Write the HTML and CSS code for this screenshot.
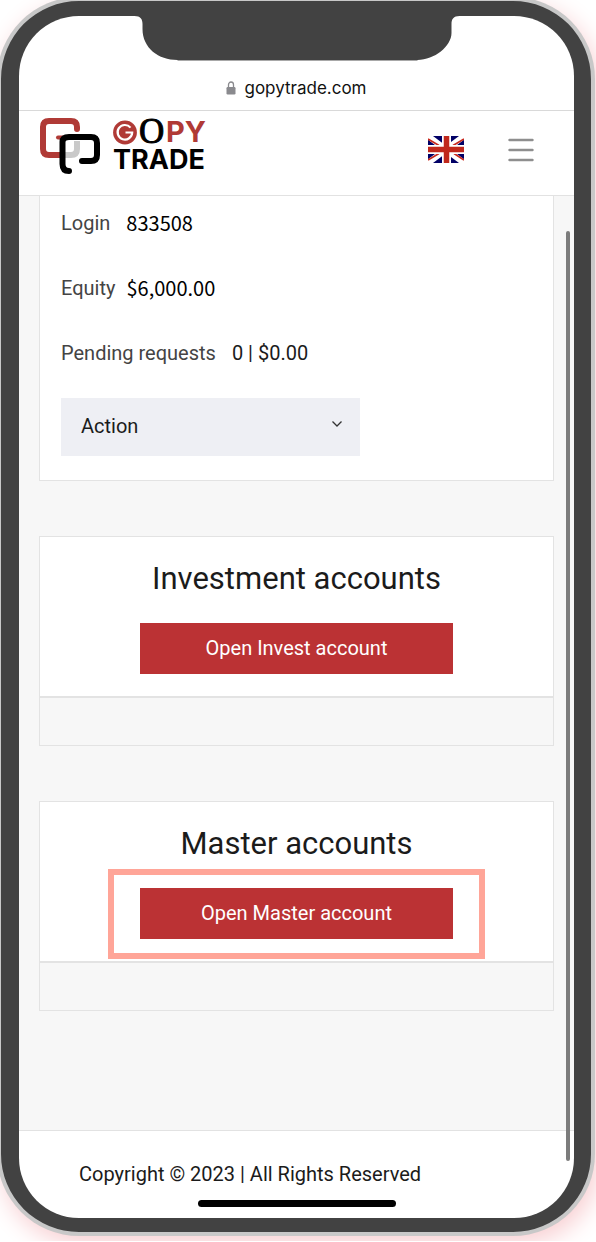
FILE: index.html
```html
<!DOCTYPE html>
<html lang="en">
<head>
<meta charset="utf-8">
<meta name="viewport" content="width=device-width, initial-scale=1">
<title>GopyTrade accounts</title>
<link rel="stylesheet" href="styles.css">
</head>
<body>
<div class="phone">
  <div class="screen">
    <svg class="notch" viewBox="0 0 325 45" aria-hidden="true">
      <path fill="#424242" d="M0 0H325C319 0 317 3 317 8V17C317 30 300 44 283 44H43C24 44 8 32 8 13V8C8 3 6 0 0 0Z"/>
      <path fill="none" stroke="#a8a8a8" d="M43 44.5H283"/>
    </svg>
    <div class="address">
      <svg class="lock" viewBox="0 0 10 14" aria-hidden="true">
        <rect x="0.5" y="6" width="9" height="7.5" rx="1.2" fill="#8a8a8e"/>
        <path d="M2.5 6.5V3.8a2.5 2.8 0 0 1 5 0V6.5" fill="none" stroke="#8a8a8e" stroke-width="1.3"/>
      </svg>
      <span>gopytrade.com</span>
    </div>

    <header class="header">
      <a class="brand" href="#" aria-label="Gopy Trade">
        <svg class="logo" viewBox="38 111 170 65" aria-hidden="true">
          <g fill="none" stroke-width="6" stroke-linecap="round">
            <path stroke="#c9c9c9" stroke-linecap="butt" d="M77 141V149Q77 155 71 155H65"/>
            <path stroke="#b03a36" d="M77 129V127Q77 121 71 121H49Q43 121 43 127V149Q43 155 49 155H61"/>
            <path stroke="#b03a36" stroke-width="4" d="M58 137.500H64"/>
            <path stroke="#000" d="M69 171Q62.500 171 62.500 164V142Q62.500 137 69 137H91Q97 137 97 143V155Q97 161 91 161H82"/>
          </g>
          <circle cx="125" cy="132.500" r="11.900" fill="#b03a36"/>
          <path fill="none" stroke="#fff" stroke-width="2.200" d="M130.500 127.600A7.300 7.300 0 1 0 132.200 132.500H125.500"/>
          <text class="logo-o" x="139" y="143">O</text>
          <text class="logo-py" x="166" y="142">PY</text>
          <text class="logo-trade" x="113" y="169">TRADE</text>
        </svg>
      </a>
      <div class="tools">
        <button class="icon-button" type="button" aria-label="Language: English">
          <svg class="flag" viewBox="0 0 36 27" aria-hidden="true">
            <rect width="36" height="27" fill="#010066"/>
            <path d="M0 0L36 27M36 0L0 27" stroke="#fff" stroke-width="6"/>
            <path d="M0 3L11 9.500M36 24L26 17.500M36 3L25 9.500M0 24L11 17.500" stroke="#c8281e" stroke-width="1.600"/>
            <path d="M18.500 0V27M0 13.500H36" stroke="#fff" stroke-width="9"/>
            <path d="M18.500 0V27M0 13.500H36" stroke="#c0281c" stroke-width="5.500"/>
          </svg>
        </button>
        <button class="icon-button" type="button" aria-label="Menu">
          <svg class="menu" viewBox="0 0 26 24" aria-hidden="true">
            <path d="M1.500 2H24.500M1.500 12H24.500M1.500 22H24.500" stroke="#8e8e8e" stroke-width="2.400" stroke-linecap="round"/>
          </svg>
        </button>
      </div>
    </header>

    <main class="main">
      <section class="card details">
        <dl class="facts">
          <div class="fact"><dt>Login</dt><dd class="entered">833508</dd></div>
          <div class="fact fact-tight"><dt>Equity</dt><dd class="entered">$6,000.00</dd></div>
          <div class="fact"><dt>Pending requests</dt><dd>0 | $0.00</dd></div>
        </dl>
        <div class="picker">
          <select class="select" aria-label="Action">
            <option>Action</option>
          </select>
          <svg class="chevron" viewBox="0 0 12 8" aria-hidden="true">
            <path d="M1.500 1.500L6 6L10.500 1.500" fill="none" stroke="#333" stroke-width="1.300"/>
          </svg>
        </div>
      </section>

      <section class="card">
        <div class="card-top">
          <h2 class="title">Investment accounts</h2>
          <div class="action"><button class="open" type="button">Open Invest account</button></div>
        </div>
        <div class="card-foot"></div>
      </section>

      <section class="card">
        <div class="card-top">
          <h2 class="title">Master accounts</h2>
          <div class="action action-marked"><button class="open" type="button">Open Master account</button></div>
        </div>
        <div class="card-foot"></div>
      </section>
    </main>

    <footer class="footer">
      <p class="copyright">Copyright © 2023 | All Rights Reserved</p>
      <div class="home-bar"></div>
    </footer>
    <div class="scroll-thumb"></div>
  </div>
</div>
</body>
</html>
```

FILE: styles.css
```css
* {
  box-sizing: border-box;
}

body {
  margin: 0;
  overflow-x: hidden;
  background: #fff;
  color: #1b1b1b;
  font-family: Roboto, "Liberation Sans", sans-serif;
  font-size: 20px;
  line-height: 24px;
}

.phone {
  margin: 1px 5px 9px 1px;
  border: solid #424242;
  border-width: 15px 17px 14px 18px;
  border-radius: 78px;
  background: #424242;
  box-shadow: 0 0 0 4px #c8c8c8, 4px 8px 24px 4px #f8cfd2;
}

.screen {
  position: relative;
  overflow: hidden;
  border-radius: 60px;
  background: #fff;
}

.notch {
  position: absolute;
  top: 0;
  left: 50%;
  width: 325px;
  height: 45px;
  transform: translateX(-50%);
}

.address {
  display: flex;
  align-items: center;
  justify-content: center;
  gap: 8px;
  padding: 60px 0 10px;
  border-bottom: 1px solid #d9d9d9;
  color: #111;
  font-family: Inter, sans-serif;
  font-size: 17px;
}

.lock {
  width: 10px;
  height: 14px;
}

.header {
  display: flex;
  align-items: center;
  justify-content: space-between;
  padding: 0 40px 19px 19px;
  border-bottom: 1px solid #e2e2e2;
}

.brand,
.logo {
  display: block;
}

.logo {
  width: 170px;
  height: 65px;
}

.logo-o {
  stroke: #000;
  font: 35px "Liberation Serif", serif;
}

.logo-py {
  fill: #b03a36;
  font: bold 29px Inter, sans-serif;
}

.logo-trade {
  font: bold 27px Inter, sans-serif;
}

.tools {
  display: flex;
  align-items: center;
  gap: 44px;
  padding-top: 12px;
}

.icon-button {
  display: block;
  padding: 0;
  border: 0;
  background: none;
}

.flag,
.menu {
  display: block;
}

.flag {
  width: 36px;
  height: 27px;
}

.menu {
  width: 26px;
  height: 24px;
}

.main {
  display: grid;
  gap: 55px;
  padding: 0 20px 119px;
  background: #f7f7f7;
}

.card {
  border: 1px solid #e3e3e3;
}

.details {
  padding: 15px 21px 24px;
  border-top: 0;
  background: #fff;
}

.facts {
  display: grid;
  gap: 41px;
  margin: 0 0 33px;
}

.fact {
  display: flex;
  gap: 16px;
}

.fact-tight {
  gap: 11px;
}

.fact dt {
  color: #444;
}

.fact dd {
  margin: 0;
}

.fact .entered {
  color: #000;
  font-family: "Noto Sans CJK SC", sans-serif;
}

.picker {
  position: relative;
  width: 299px;
  max-width: 100%;
}

.select {
  display: block;
  width: 100%;
  height: 58px;
  padding: 0 20px 2px;
  border: 0;
  border-radius: 0;
  background: #eeeff4;
  color: #1b1b1b;
  font: inherit;
  appearance: none;
}

.chevron {
  position: absolute;
  top: 22px;
  right: 17px;
  width: 12px;
  height: 8px;
  pointer-events: none;
}

.card-top {
  display: grid;
  gap: 24px;
  padding: 22px 0;
  border-bottom: 2px solid #e3e3e3;
  background: #fff;
}

.title {
  margin: 0;
  font-size: 31px;
  font-weight: 400;
  line-height: 40px;
  text-align: center;
}

.action {
  position: relative;
  width: 61%;
  margin: 0 auto;
}

.action-marked::after {
  position: absolute;
  inset: -19px -32px -20px;
  border: 6px solid #ffa598;
  content: "";
  pointer-events: none;
}

.open {
  display: block;
  width: 100%;
  height: 51px;
  padding: 0 0 2px;
  border: 0;
  background: #bb3234;
  color: #fff;
  font: inherit;
}

.card-foot {
  height: 47px;
}

.footer {
  padding: 31px 60px 11px;
  border-top: 1px solid #e2e2e2;
}

.copyright {
  margin: 0 0 14px;
}

.home-bar {
  width: 198px;
  height: 7px;
  margin: 0 auto;
  border-radius: 4px;
  background: #000;
}

.scroll-thumb {
  position: absolute;
  top: 215px;
  right: 4px;
  bottom: 57px;
  width: 4px;
  border-radius: 2px;
  background: #7c7c7c;
}
```
